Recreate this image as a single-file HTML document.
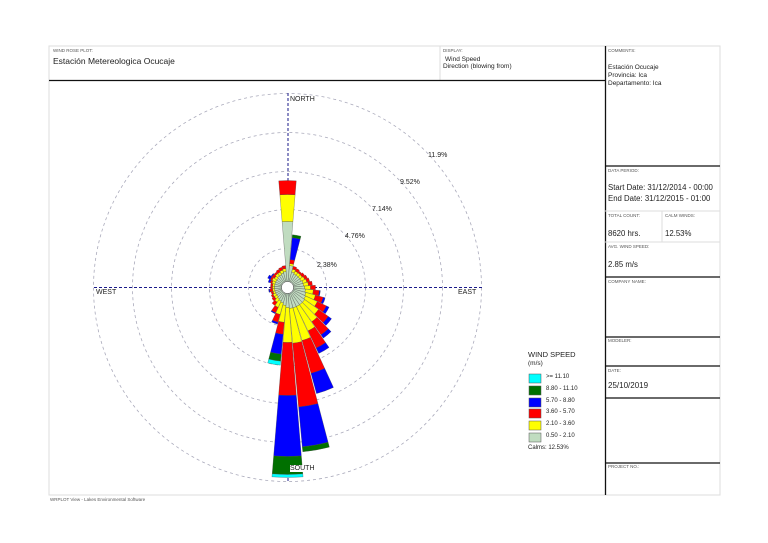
<!DOCTYPE html>
<html><head><meta charset="utf-8"><style>
body{margin:0;background:#fff;width:768px;height:543px;overflow:hidden;font-family:"Liberation Sans",sans-serif;color:#222}
.a{position:absolute;white-space:nowrap}
.t{font-size:4.5px;color:#555}
.s{font-size:7px}
.m{font-size:8.5px}
</style></head><body>
<svg width="768" height="543" style="position:absolute;left:0;top:0" id="sv">
<rect x="49" y="46" width="671" height="449" fill="none" stroke="#ddd" stroke-width="1"/>
<line x1="440" y1="46" x2="440" y2="80" stroke="#ddd"/>
<line x1="49" y1="80.5" x2="605" y2="80.5" stroke="#111" stroke-width="1.3"/>
<line x1="605.5" y1="46" x2="605.5" y2="495" stroke="#111" stroke-width="1.3"/>
<g stroke="#111" stroke-width="1.2">
<line x1="605" y1="166" x2="720" y2="166"/>
<line x1="605" y1="277" x2="720" y2="277"/>
<line x1="605" y1="337" x2="720" y2="337"/>
<line x1="605" y1="366" x2="720" y2="366"/>
<line x1="605" y1="398" x2="720" y2="398"/>
<line x1="605" y1="463" x2="720" y2="463"/>
</g>
<g stroke="#ddd"><line x1="605" y1="211" x2="720" y2="211"/><line x1="605" y1="242" x2="720" y2="242"/><line x1="662" y1="211" x2="662" y2="242"/></g>
<g fill="none" stroke="#aab" stroke-dasharray="3,3" stroke-width="0.8">
<circle cx="287.5" cy="287.5" r="39"/><circle cx="287.5" cy="287.5" r="78"/><circle cx="287.5" cy="287.5" r="116"/><circle cx="287.5" cy="287.5" r="155"/><circle cx="287.5" cy="287.5" r="194"/>
</g>
<g stroke="#1a1a8a" stroke-dasharray="3,2" stroke-width="1">
<line x1="94" y1="287.5" x2="482" y2="287.5"/><line x1="288" y1="93" x2="288" y2="481"/>
</g>
<g id="rose"></g>
<circle cx="287.5" cy="287.5" r="6" fill="#fff" stroke="#555" stroke-width="0.5"/>
<g stroke="#555" stroke-width="0.5">
<rect x="529" y="374" width="12" height="9" fill="#00ffff"/>
<rect x="529" y="386" width="12" height="9" fill="#007000"/>
<rect x="529" y="398" width="12" height="9" fill="#0000ff"/>
<rect x="529" y="409" width="12" height="9" fill="#ff0000"/>
<rect x="529" y="421" width="12" height="9" fill="#ffff00"/>
<rect x="529" y="433" width="12" height="9" fill="#c0dcc0"/>
</g>
</svg>
<div class="a t" style="left:53px;top:48px">WIND ROSE PLOT:</div>
<div class="a m" style="left:53px;top:56px">Estación Metereologica Ocucaje</div>
<div class="a t" style="left:443px;top:48px">DISPLAY:</div>
<div class="a s" style="left:445px;top:56px;font-size:6.5px">Wind Speed</div>
<div class="a s" style="left:443px;top:63px;font-size:6.5px">Direction (blowing from)</div>
<div class="a t" style="left:608px;top:48px">COMMENTS:</div>
<div class="a s" style="left:608px;top:64px;font-size:6.5px;line-height:8px">Estación Ocucaje<br>Provincia: Ica<br>Departamento: Ica</div>
<div class="a t" style="left:608px;top:168px">DATA PERIOD:</div>
<div class="a m" style="left:608px;top:183px;line-height:10.5px;font-size:7.8px">Start Date: 31/12/2014 - 00:00<br>End Date: 31/12/2015 - 01:00</div>
<div class="a t" style="left:608px;top:213px">TOTAL COUNT:</div>
<div class="a t" style="left:665px;top:213px">CALM WINDS:</div>
<div class="a s" style="left:608px;top:229px;font-size:7.8px">8620 hrs.</div>
<div class="a s" style="left:665px;top:229px;font-size:7.8px">12.53%</div>
<div class="a t" style="left:608px;top:244px">AVG. WIND SPEED:</div>
<div class="a s" style="left:608px;top:260px;font-size:7.8px">2.85 m/s</div>
<div class="a t" style="left:608px;top:279px">COMPANY NAME:</div>
<div class="a t" style="left:608px;top:338px">MODELER:</div>
<div class="a t" style="left:608px;top:368px">DATE:</div>
<div class="a m" style="left:608px;top:381px;font-size:8px">25/10/2019</div>
<div class="a t" style="left:608px;top:464px">PROJECT NO.:</div>
<div class="a t" style="left:50px;top:497px">WRPLOT View - Lakes Environmental Software</div>
<div class="a s" style="left:290px;top:96px">NORTH</div>
<div class="a s" style="left:290px;top:465px;background:#fff">SOUTH</div>
<div class="a s" style="left:96px;top:289px">WEST</div>
<div class="a s" style="left:458px;top:289px">EAST</div>
<div class="a s" style="left:428px;top:152px">11.9%</div>
<div class="a s" style="left:400px;top:179px">9.52%</div>
<div class="a s" style="left:372px;top:206px">7.14%</div>
<div class="a s" style="left:345px;top:233px">4.76%</div>
<div class="a s" style="left:317px;top:262px">2.38%</div>
<div class="a s" style="left:528px;top:350px;font-size:7.5px">WIND SPEED</div>
<div class="a s" style="left:528px;top:360px;font-size:6.5px">(m/s)</div>
<div class="a s" style="left:546px;top:374px;font-size:6px">&gt;= 11.10</div>
<div class="a s" style="left:546px;top:386px;font-size:6px">8.80 - 11.10</div>
<div class="a s" style="left:546px;top:398px;font-size:6px">5.70 - 8.80</div>
<div class="a s" style="left:546px;top:409px;font-size:6px">3.60 - 5.70</div>
<div class="a s" style="left:546px;top:421px;font-size:6px">2.10 - 3.60</div>
<div class="a s" style="left:546px;top:433px;font-size:6px">0.50 - 2.10</div>
<div class="a s" style="left:528px;top:445px;font-size:6px">Calms: 12.53%</div>
<script>
var cols=["#c0dcc0","#ffff00","#ff0000","#0000ff","#007000","#00ffff"];
var D={0:[66,93,107],10:[22,24,28,50,53],20:[16,19,22],30:[15,18,21],40:[15,18,20],50:[15,18,21],60:[15,19,22],70:[16,20,23],80:[16,21,25],
90:[17,23,28],100:[18,26,32,33],110:[19,29,37,39],120:[20,33,43,46],130:[21,38,50,54],140:[21,42,58,62],150:[21,48,67,73],
160:[21,55,89,110],170:[21,56,120,160,165],180:[20,55,108,169,187,190],190:[18,35,47,67,74,78],200:[16,28,36,38],210:[15,22,28,29],
220:[14,18,22],230:[13,16,19],240:[13,16,18],250:[13,15,17],260:[13,15,18,19],270:[13,15,17],280:[13,15,17],290:[13,16,18,20],
300:[13,17,19,22],310:[13,16,19,20],320:[14,17,19],330:[14,17,20],340:[15,18,21],350:[16,19,22]};
var cx=287.5,cy=287.5,h=4.7*Math.PI/180,g=document.getElementById("rose"),s="";
function P(r,a){return (cx+r*Math.sin(a)).toFixed(2)+","+(cy-r*Math.cos(a)).toFixed(2)}
for(var k in D){var a=k*Math.PI/180,arr=D[k],r0=6;
for(var i=0;i<arr.length;i++){var r1=arr[i];
s+='<path d="M'+P(r0,a-h)+'L'+P(r1,a-h)+'A'+r1+','+r1+' 0 0 1 '+P(r1,a+h)+'L'+P(r0,a+h)+'A'+r0+','+r0+' 0 0 0 '+P(r0,a-h)+'Z" fill="'+cols[i]+'" stroke="#444" stroke-width="0.3"/>';r0=r1;}}
g.innerHTML=s;
</script>
</body></html>
